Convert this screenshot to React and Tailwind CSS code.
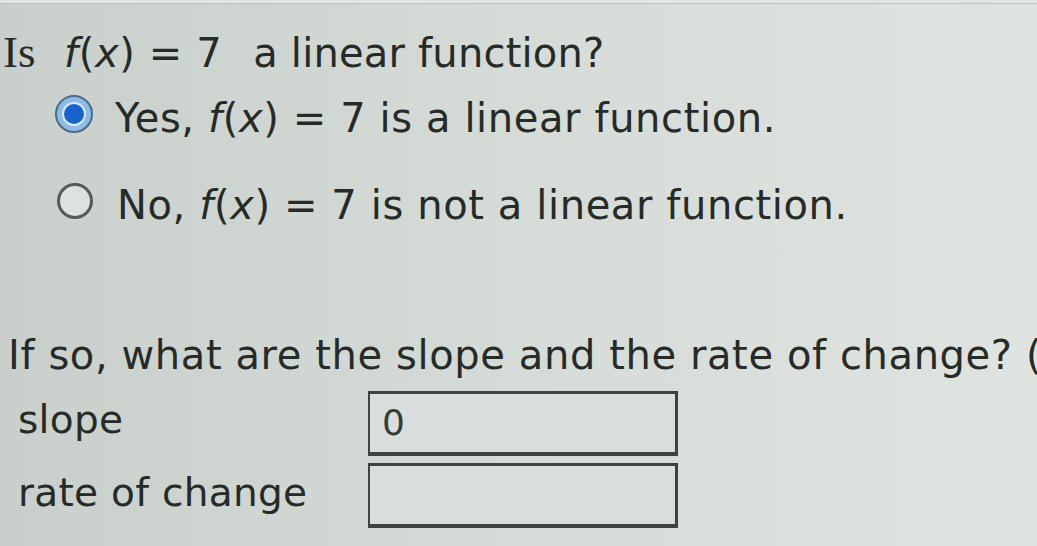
import React from 'react';

const sans = { fontFamily: '"DejaVu Sans", Verdana, sans-serif' };

function Fx() {
  return (
    <span className="whitespace-pre">
      <i>f</i>(<i>x</i>) = 7
    </span>
  );
}

function Radio({ checked }) {
  if (checked) {
    return (
      <span className="mb-[9px] flex h-[38px] w-[38px] shrink-0 items-center justify-center rounded-full border-2 border-[#4d6a8a] bg-[#8cbbe8]">
        <span className="h-[24px] w-[24px] rounded-full border-2 border-[#dbe9f5] bg-[#1763cc]" />
      </span>
    );
  }
  return <span className="mb-[9px] h-[36px] w-[36px] shrink-0 rounded-full border-[3px] border-[#555b58] bg-[#dde2df]" />;
}

function Box({ value }) {
  return (
    <div className="flex h-[65px] w-[310px] items-center border-[#3d4340] border-t-[3px] border-r-[3px] border-b-4 border-l-2 bg-[#d8dedb] pl-[12px] text-[36px] text-[#363b38]">
      {value}
    </div>
  );
}

export default function App() {
  return (
    <div
      className="h-[546px] w-[1037px] overflow-hidden bg-gradient-to-r from-[#c9d0cc] via-[#d5dbd7] to-[#e0e4e1] text-[#262b28] tracking-[0.6px]"
      style={sans}
    >
      <div className="h-[4px] border-b border-[#bfc5c1] bg-[#e2e6e3]" />

      <div className="flex items-baseline pl-[3px] pt-[24px] text-[40px] leading-[48px]">
        <span className="w-[61px] text-[45px] tracking-normal" style={{ fontFamily: '"Liberation Serif", serif' }}>
          Is
        </span>
        <Fx />
        <span className="ml-[31px] tracking-[0.2px]">a linear function?</span>
      </div>

      <div className="mt-[17px] flex items-center pl-[55px] text-[40px] leading-[48px]">
        <Radio checked />
        <span className="ml-[22px] whitespace-pre">Yes, <Fx /> is a linear function.</span>
      </div>

      <div className="mt-[39px] flex items-center pl-[57px] text-[40px] leading-[48px]">
        <Radio />
        <span className="ml-[24px] whitespace-pre">No, <Fx /> is not a linear function.</span>
      </div>

      <div className="mt-[102px] whitespace-nowrap pl-[8px] text-[40px] leading-[48px]">
        If so, what are the slope and the rate of change? (
      </div>

      <div className="mt-[12px] flex flex-col gap-[7px] pl-[18px] text-[39px] leading-[48px] tracking-[0.3px]">
        <div className="flex items-center">
          <span className="mb-[8px] w-[350px]">slope</span>
          <Box value="0" />
        </div>
        <div className="flex items-center">
          <span className="mb-[6px] w-[350px]">rate of change</span>
          <Box value="" />
        </div>
      </div>
    </div>
  );
}
